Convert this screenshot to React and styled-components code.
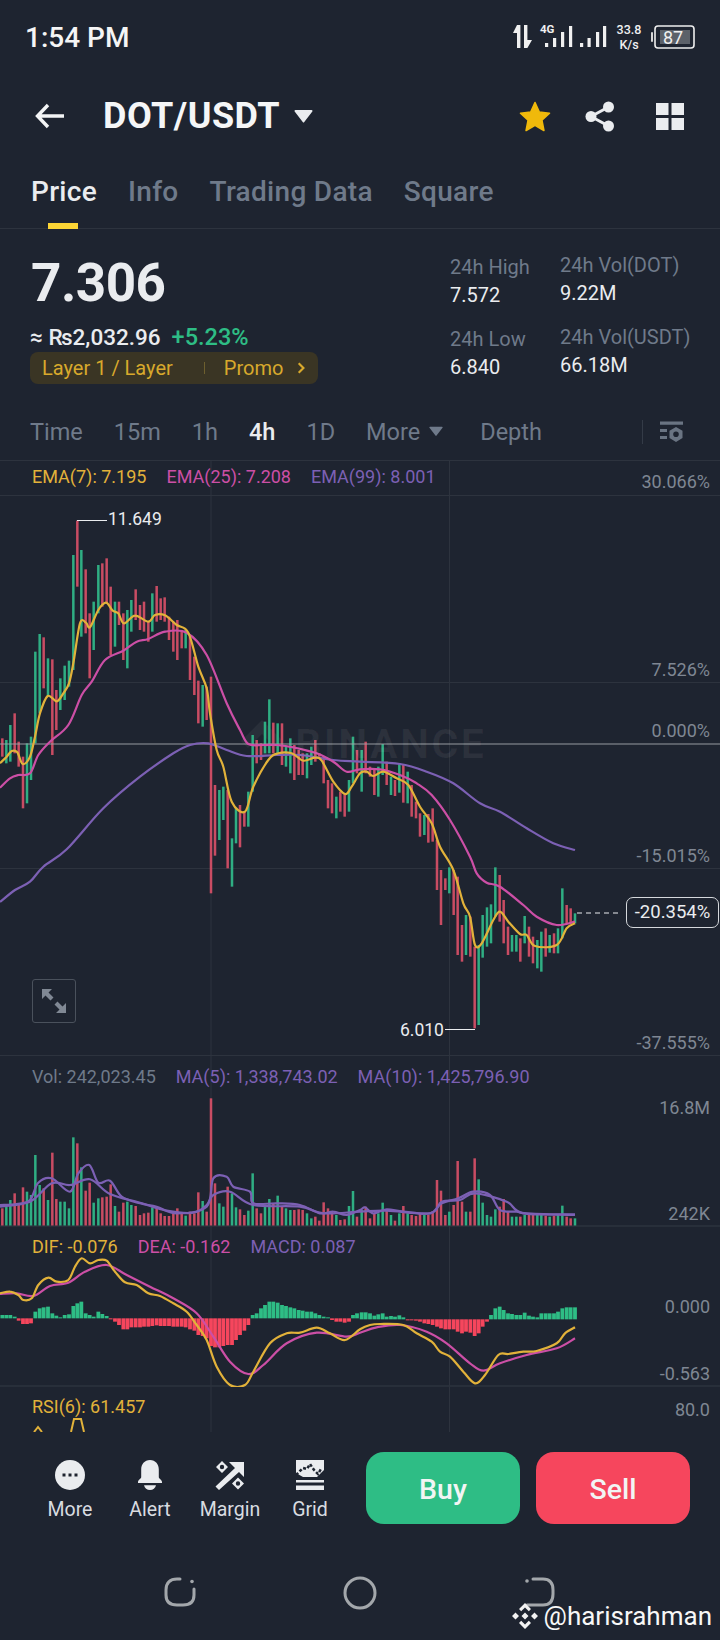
import React from "react";
import styled, { createGlobalStyle } from "styled-components";

const GlobalStyle = createGlobalStyle`
  html, body {
    margin: 0;
    padding: 0;
    background: #1e2430;
  }
  * {
    box-sizing: border-box;
  }
`;

const WHITE = "#eaecef";
const GRAY = "#6f7a8a";
const AXIS = "#7f8793";
const YELLOW = "#e2b23a";
const PINK = "#cc4fa6";
const PURPLE = "#7c60b4";
const GREEN = "#2ebd85";
const RED = "#f6465d";
const GRID = "#2d333e";

// [x, top, bottom, volume top, macd y, green?] read off the chart at 3x
const leftRows = [
  [7,745,800,475,795,0],[19,750,820,470,795,1],[31,705,815,450,795,1],[44,670,790,430,800,0],
  [56,755,830,465,812,0],[69,800,955,412,822,0],[81,760,940,425,822,1],[93,740,870,435,820,1],
  [106,485,760,315,785,1],[119,432,670,405,775,1],[131,442,595,415,772,0],[144,505,620,450,770,1],
  [157,508,795,308,790,0],[169,600,720,447,797,0],[181,565,660,455,802,1],[194,527,630,455,795,1],
  [207,512,590,475,793,1],[220,195,540,262,768,1],[232,92,290,280,760,0],[244,180,440,352,755,1],
  [257,238,430,422,790,0],[269,370,565,398,795,0],[281,335,480,458,800,1],[295,225,370,445,785,1],
  [307,220,350,442,792,0],[320,205,340,440,798,0],[332,290,495,403,808,0],[345,335,470,468,815,1],
  [357,335,405,485,825,0],[370,370,510,458,838,0],[382,360,535,455,838,1],[394,330,425,465,832,1],
  [407,298,390,468,832,0],[420,345,420,495,832,0],[432,335,425,490,830,0],[445,395,455,488,830,0],
  [457,310,425,472,828,1],[470,288,395,475,826,0],[482,325,390,490,828,0],[494,322,395,498,828,0],
  [507,380,450,498,828,0],[520,395,485,490,830,0],[532,390,510,475,830,0],[545,420,475,490,830,0],
  [557,420,475,497,832,1],[570,440,570,485,838,0],[583,500,615,490,842,0],[595,572,700,427,855,0],
  [608,585,710,453,858,1],[620,590,690,485,865,0],[633,560,1210,145,888,0],[645,885,1097,400,892,0],
  [658,900,1050,460,892,1],[670,890,990,470,888,1],[683,900,1135,410,885,0],[696,1045,1190,430,885,1],
  [708,955,1060,472,870,1],[720,945,1072,478,855,0],[733,965,1010,495,842,0],[745,905,1010,482,825,1],
  [758,735,905,370,795,1],[770,750,820,475,790,0],[783,760,810,490,775,0],[795,695,790,470,765,1],
  [808,628,790,447,755,1],[820,698,790,462,755,0],[833,700,790,437,758,1],[846,700,825,470,765,0],
  [858,770,830,475,768,1],[871,745,850,480,772,1],[883,765,870,480,775,0],[896,780,855,478,780,0],
  [908,790,855,480,782,0],[921,790,865,490,785,1],[934,770,825,505,785,1],[946,750,815,500,790,0],
  [958,790,800,512,795,0],[971,800,880,457,800,0],[984,870,955,475,802,0],[996,880,970,485,810,0],
  [1009,920,985,495,815,1],[1021,905,965,510,815,0],[1034,910,980,508,818,0],[1047,870,965,468,815,1],
  [1059,740,880,423,795,1],[1071,780,850,500,790,0],
];

const rightRows = [
  [5,270,395,480,787,1],[17,245,340,470,787,0],[30,320,350,505,790,0],[43,330,405,490,797,0],
  [55,320,410,490,793,1],[68,252,345,458,790,1],[80,305,375,480,800,0],[93,350,405,495,798,1],
  [105,360,408,512,800,0],[118,310,398,490,796,1],[130,315,428,468,802,0],[143,335,430,490,810,1],
  [155,375,470,495,810,0],[168,425,475,498,812,0],[180,460,530,490,815,0],[193,465,525,495,820,1],
  [205,462,548,495,822,0],[218,445,545,485,825,0],[231,540,690,390,830,0],[243,630,795,422,835,0],
  [256,655,690,495,838,0],[268,622,700,485,838,1],[281,630,765,465,838,0],[293,650,885,333,845,0],
  [306,795,905,455,850,0],[318,765,885,485,845,1],[331,770,890,485,848,0],[344,860,1105,325,858,0],
  [356,855,1095,388,850,1],[368,765,893,458,830,1],[381,742,860,495,815,1],[393,733,850,500,795,1],
  [406,622,770,478,775,1],[419,645,785,470,770,0],[431,720,850,447,780,0],[444,800,885,485,790,0],
  [456,825,875,500,792,1],[469,825,875,500,795,1],[481,835,905,500,795,0],[494,768,850,495,788,1],
  [507,800,890,495,797,0],[519,830,910,495,800,0],[532,840,925,495,802,1],[544,815,935,495,790,1],
  [557,805,890,497,790,0],[569,825,878,500,790,1],[582,820,880,497,790,0],[594,805,880,495,785,1],
  [607,685,835,467,775,1],[620,735,790,500,772,0],[632,745,790,505,772,0],[645,760,790,505,772,1],
];

const mapLeft = (v) => 490 + v / 3;
const mapRight = (v) => 660 + v / 3;
const mapLower = (v) => 1050 + v / 3;

const candles = [
  ...leftRows.map(([x, t, b, v, m, up]) => ({ x: x / 3, top: mapLeft(t), bottom: mapLeft(b), vol: mapLower(v), macd: mapLower(m), zero: 805, m, up })),
  ...rightRows.map(([x, t, b, v, m, up]) => ({ x: 360 + x / 3, top: mapRight(t), bottom: mapRight(b), vol: mapLower(v), macd: mapLower(m), zero: 808, m, up })),
];

// catmull-rom through the points, so the averages don't look like polygons
const smoothPath = (pts) => {
  let d = `M${pts[0][0].toFixed(1)} ${pts[0][1].toFixed(1)}`;
  for (let i = 0; i < pts.length - 1; i++) {
    const p0 = pts[i - 1] || pts[i];
    const p1 = pts[i];
    const p2 = pts[i + 1];
    const p3 = pts[i + 2] || p2;
    const c1x = p1[0] + (p2[0] - p0[0]) / 6;
    const c1y = p1[1] + (p2[1] - p0[1]) / 6;
    const c2x = p2[0] - (p3[0] - p1[0]) / 6;
    const c2y = p2[1] - (p3[1] - p1[1]) / 6;
    d += `C${c1x.toFixed(1)} ${c1y.toFixed(1)} ${c2x.toFixed(1)} ${c2y.toFixed(1)} ${p2[0].toFixed(1)} ${p2[1].toFixed(1)}`;
  }
  return d;
};

// line series, each as a left half and a right half in the same 3x units
const toPath = (left, right, mapL, mapR) =>
  smoothPath([
    ...left.map(([x, y]) => [x / 3, mapL(y)]),
    ...right.map(([x, y]) => [360 + x / 3, mapR(y)]),
  ]);

const ema7 = toPath(
  [[0,820],[20,800],[35,783],[52,787],[68,822],[90,800],[105,740],[120,670],[143,618],[170,634],[190,610],[207,580],[220,520],[240,400],[258,398],[270,412],[295,360],[318,338],[338,362],[355,370],[372,400],[405,377],[445,395],[465,375],[495,376],[530,405],[565,428],[595,530],[620,595],[630,670],[650,780],[670,830],[695,935],[735,965],[760,890],[805,810],[835,790],[875,790],[910,812],[945,803],[965,812],[1000,875],[1035,912],[1055,890],[1080,850]],
  [[20,335],[40,348],[70,335],[110,355],[145,375],[180,440],[215,490],[240,560],[280,630],[310,730],[330,770],[345,855],[365,850],[400,780],[420,755],[445,785],[480,822],[500,825],[525,858],[590,855],[620,805],[645,790]],
  mapLeft,
  mapRight
);
const ema25 = toPath(
  [[0,893],[30,865],[55,855],[90,850],[115,795],[150,755],[205,705],[245,615],[275,575],[315,510],[370,482],[410,455],[445,447],[495,425],[560,428],[620,495],[680,640],[720,720],[745,762],[790,765],[830,765],[880,772],[950,790],[1000,815],[1040,845],[1080,838]],
  [[60,328],[120,345],[170,370],[215,405],[270,480],[330,590],[350,640],[380,668],[420,680],[490,735],[530,770],[590,795],[645,785]],
  mapLeft,
  mapRight
);
const ema99 = toPath(
  [[0,1236],[45,1200],[90,1175],[130,1130],[200,1078],[310,955],[420,860],[520,790],[570,765],[625,760],[680,780],[740,798],[830,795],[900,795],[1000,810],[1080,815]],
  [[120,312],[200,335],[280,370],[360,430],[420,455],[500,505],[580,550],[645,570]],
  mapLeft,
  mapRight
);
const volMa5 = toPath(
  [[0,465],[50,462],[90,450],[115,398],[155,385],[210,425],[235,370],[268,345],[295,398],[330,392],[365,440],[420,460],[470,470],[530,490],[620,470],[640,385],[680,380],[700,410],[750,425],[760,460],[830,460],[900,465],[960,490],[1000,485],[1040,495],[1080,480]],
  [[15,472],[40,490],[80,478],[130,485],[210,490],[245,460],[295,445],[340,425],[390,435],[420,480],[470,485],[500,490],[645,495]],
  mapLower,
  mapLower
);
const volMa10 = toPath(
  [[0,470],[90,455],[155,400],[210,405],[270,388],[330,432],[420,458],[500,482],[580,488],[620,465],[640,435],[690,425],[760,465],[900,470],[970,490],[1080,485]],
  [[80,482],[210,490],[245,455],[300,450],[345,430],[440,455],[490,490],[645,493]],
  mapLower,
  mapLower
);
const dif = toPath(
  [[0,730],[30,725],[55,735],[70,750],[95,745],[115,705],[145,683],[170,695],[205,690],[225,650],[245,625],[270,640],[295,630],[320,632],[345,665],[375,697],[410,705],[445,730],[480,738],[520,760],[560,785],[590,825],[620,870],[650,950],[690,1005],[735,1005],[760,965],[810,880],[860,850],[900,848],[950,833],[990,850],[1035,870],[1080,838]],
  [[30,825],[60,822],[130,825],[170,850],[215,875],[240,905],[270,920],[310,965],[345,1000],[375,975],[415,915],[445,912],[490,905],[530,903],[590,880],[615,850],[645,832]],
  mapLower,
  mapLower
);
const dea = toPath(
  [[0,732],[50,730],[100,738],[150,708],[205,698],[255,665],[320,645],[380,675],[450,710],[520,745],[590,790],[640,860],[690,935],[745,972],[790,945],[860,880],[950,848],[1040,860],[1080,848]],
  [[50,832],[120,825],[200,845],[260,880],[330,940],[370,962],[420,940],[500,915],[590,895],[645,865]],
  mapLower,
  mapLower
);

const Page = styled.div`
  width: 720px;
  height: 1640px;
  overflow: hidden;
  position: relative;
  background: #1e2430;
  color: ${WHITE};
  font-family: Roboto, "Noto Sans", sans-serif;
`;

const StatusBar = styled.div`
  height: 74px;
  padding: 0 25px;
  display: flex;
  align-items: center;
  justify-content: space-between;
`;

const Clock = styled.div`
  padding-top: 1px;
  font-size: 28px;
  font-weight: 500;
  color: #f5f5f5;
`;

const Header = styled.div`
  height: 84px;
  padding: 0 36px 0 35px;
  display: flex;
  align-items: center;
`;

const PairName = styled.div`
  margin: 0 14px 0 38px;
  font-size: 36px;
  font-weight: 700;
  letter-spacing: 0.5px;
  color: #f5f6f7;
`;

const HeaderIcons = styled.div`
  margin-left: auto;
  display: flex;
  align-items: center;
  gap: 34px;

  svg:last-child {
    margin-left: 7px;
  }
`;

const Tabs = styled.div`
  height: 71px;
  padding: 0 31px;
  display: flex;
  gap: 31px;
  border-bottom: 1px solid ${GRID};
`;

const Tab = styled.div`
  position: relative;
  height: 71px;
  line-height: 68px;
  font-size: 28px;
  font-weight: 500;
  letter-spacing: 0.3px;
  color: ${(p) => (p.$active ? WHITE : GRAY)};

  ${(p) =>
    p.$active &&
    `&::after {
      content: "";
      position: absolute;
      left: 17px;
      bottom: 0;
      width: 30px;
      height: 6px;
      background: #fcd535;
    }`}
`;

const Summary = styled.div`
  height: 175px;
  padding-left: 30px;
  display: flex;
`;

const PriceCol = styled.div`
  width: 420px;
  padding-top: 27px;
`;

const BigPrice = styled.div`
  height: 54px;
  line-height: 54px;
  margin-left: 1px;
  font-size: 53px;
  font-weight: 700;
  letter-spacing: -0.5px;
`;

const SubPrice = styled.div`
  margin-top: 13px;
  height: 28px;
  line-height: 28px;
  font-size: 22.5px;
  font-weight: 500;
  display: flex;
  gap: 11px;
`;

const Change = styled.span`
  color: ${GREEN};
  font-size: 23.5px;
`;

const Pill = styled.div`
  margin-top: 1px;
  width: 288px;
  height: 32px;
  padding: 0 12px;
  display: flex;
  align-items: center;
  border-radius: 8px;
  background: #3a3524;
  font-size: 20px;
  color: #d8a92c;
  white-space: nowrap;
`;

const PillLabel = styled.span`
  width: 162px;
  flex: none;
`;

const PillDivider = styled.span`
  width: 1px;
  height: 12px;
  margin-right: 19px;
  background: #6d5f2e;
`;

const StatCol = styled.div`
  width: ${(p) => p.$width}px;
  padding-top: ${(p) => p.$top}px;
`;

const StatLabel = styled.div`
  height: 28px;
  line-height: 28px;
  font-size: 20px;
  color: ${GRAY};
  white-space: nowrap;
`;

const StatValue = styled.div`
  height: 28px;
  line-height: 28px;
  margin-bottom: 16px;
  font-size: 20px;
  color: ${WHITE};
  white-space: nowrap;
`;

const Intervals = styled.div`
  height: 57px;
  padding: 0 36px 1px 30px;
  display: flex;
  align-items: center;
  gap: 31px;
  border-bottom: 1px solid ${GRID};
  font-size: 23.5px;
  color: ${GRAY};
`;

const Interval = styled.span`
  display: flex;
  align-items: center;
  gap: 9px;
  margin-right: ${(p) => p.$after || 0}px;
  color: ${(p) => (p.$active ? WHITE : GRAY)};
  font-weight: ${(p) => (p.$active ? 500 : 400)};
`;

const IntervalTools = styled.div`
  margin-left: auto;
  display: flex;
  align-items: center;
  gap: 16px;
`;

const ToolDivider = styled.span`
  width: 1px;
  height: 24px;
  background: #343b47;
`;

const Charts = styled.div`
  height: 971px;
  display: flex;
  flex-direction: column;
  overflow: hidden;
`;

const Pane = styled.div`
  position: relative;
  height: ${(p) => p.$height}px;
  flex: none;
`;

const PaneDrawing = styled.svg`
  position: absolute;
  left: 0;
  top: 0;
  display: block;
`;

const Legend = styled.div`
  position: relative;
  height: ${(p) => p.$height}px;
  padding-left: 32px;
  display: flex;
  align-items: center;
  gap: 20px;
  font-size: 18px;
  white-space: nowrap;
`;

const LegendItem = styled.span`
  color: ${(p) => p.$color};
`;

const AxisLabel = styled.div`
  position: absolute;
  right: 10px;
  top: ${(p) => p.$top}px;
  height: 24px;
  line-height: 24px;
  font-size: 18px;
  color: ${AXIS};
`;

const PriceMark = styled.div`
  position: absolute;
  left: ${(p) => p.$left}px;
  top: ${(p) => p.$top}px;
  height: 24px;
  line-height: 24px;
  font-size: 17.5px;
  color: ${WHITE};
`;

const CurrentTag = styled.div`
  position: absolute;
  left: 626px;
  top: 436px;
  width: 93px;
  height: 31px;
  line-height: 29px;
  text-align: center;
  border: 1px solid #d5d8dc;
  border-radius: 7px;
  background: #1e2430;
  font-size: 18.5px;
  color: ${WHITE};
`;

const Watermark = styled.div`
  position: absolute;
  left: 295px;
  top: 260px;
  height: 46px;
  line-height: 46px;
  font-size: 41px;
  font-weight: 700;
  letter-spacing: 2.5px;
  color: rgba(255, 255, 255, 0.06);
`;

const ExpandButton = styled.div`
  position: absolute;
  left: 32px;
  top: 518px;
  width: 44px;
  height: 44px;
  display: flex;
  align-items: center;
  justify-content: center;
  border: 1px solid #4a515c;
  border-radius: 3px;
  background: #1e2430;
`;

const ActionBar = styled.div`
  padding: 20px 30px 0;
  display: flex;
  gap: 16px;
`;

const ToolGrid = styled.div`
  width: 320px;
  display: grid;
  grid-template-columns: repeat(4, 80px);
`;

const Tool = styled.div`
  padding-top: 8px;
  display: flex;
  flex-direction: column;
  align-items: center;
  gap: 8px;
  font-size: 19.5px;
  line-height: 24px;
  color: #d9dce0;
`;

const TradeButton = styled.div`
  width: 154px;
  height: 72px;
  padding-top: 3px;
  border-radius: 18px;
  display: flex;
  align-items: center;
  justify-content: center;
  background: ${(p) => p.$bg};
  font-size: 28.5px;
  font-weight: 500;
  color: #f2f5f4;
`;

const NavBar = styled.div`
  margin-top: 52px;
  padding: 0 90px;
  display: grid;
  grid-template-columns: repeat(3, 180px);
  justify-items: center;
`;

const Credit = styled.div`
  position: absolute;
  right: 8px;
  bottom: 7px;
  display: flex;
  align-items: center;
  gap: 5px;
  font-size: 26px;
  line-height: 34px;
  color: #f7f7f7;
`;

const NetSpeed = styled.div`
  width: 26px;
  text-align: center;
  font-size: 12.5px;
  line-height: 15px;
  font-weight: 500;
  color: #f0f0f0;
`;

const StatusIcons = styled.div`
  display: flex;
  align-items: center;
  gap: 9px;
`;

const barTops = [21, 16, 10, 4];

function SignalIcon() {
  return (
    <svg width="94" height="30" viewBox="0 0 94 30">
      <path d="M4 3h3.400v23H4zM4 3v8H0zM11 3h3.400v23H11zM14.400 26v-8H19z" fill="#f0f0f0" />
      <text x="27" y="10.500" fontSize="11.500" fontWeight="700" fill="#f0f0f0" fontFamily="Roboto, sans-serif">4G</text>
      {[32, 40, 48, 56].map((x, i) => (
        <rect key={x} x={x} y={barTops[i]} width="3.200" height={25 - barTops[i]} fill="#f0f0f0" />
      ))}
      {[67, 74.500, 83, 90].map((x, i) => (
        <rect key={x} x={x} y={barTops[i]} width="3.200" height={25 - barTops[i]} fill="#f0f0f0" />
      ))}
    </svg>
  );
}

function BatteryIcon() {
  return (
    <svg width="44" height="24" viewBox="0 0 44 24">
      <rect x="0" y="7" width="2" height="10" rx="1" fill="#d8d8d8" />
      <rect x="4" y="1" width="39" height="22" rx="3" fill="none" stroke="#eeeeee" strokeWidth="1.600" />
      <rect x="9" y="5" width="30" height="14" fill="#5c6169" />
      <text x="12" y="18.500" fontSize="18" fill="#f0f0f0" fontFamily="Roboto, sans-serif">87</text>
    </svg>
  );
}

function BackArrow() {
  return (
    <svg width="30" height="26" viewBox="0 0 30 26">
      <path d="M29 13H3M13 2L2.500 13 13 24" fill="none" stroke="#f3f4f5" strokeWidth="3.400" />
    </svg>
  );
}

function Caret({ size = 19, color = WHITE }) {
  return (
    <svg width={size} height={size * 0.75} viewBox="0 0 20 15">
      <path d="M1.500 1h17a1 1 0 0 1 .8 1.600l-8.500 11a1 1 0 0 1-1.600 0l-8.500-11A1 1 0 0 1 1.500 1z" fill={color} />
    </svg>
  );
}

function StarIcon() {
  return (
    <svg width="32" height="31" viewBox="0 0 32 31">
      <path
        d="M16 1.500l4.300 9.500 10.200 1.200-7.600 7 2 10.300L16 24.300 7.100 29.500l2-10.300-7.600-7L11.700 11z"
        fill="#f0b90b"
        stroke="#f0b90b"
        strokeWidth="1.600"
        strokeLinejoin="round"
      />
    </svg>
  );
}

function ShareIcon() {
  return (
    <svg width="30" height="31" viewBox="0 0 30 31">
      <circle cx="6" cy="15.500" r="5.500" fill={WHITE} />
      <circle cx="23.500" cy="6" r="5.500" fill={WHITE} />
      <circle cx="23.500" cy="25" r="5.500" fill={WHITE} />
      <path d="M6 15.500L23.500 6M6 15.500L23.500 25" stroke={WHITE} strokeWidth="3" />
    </svg>
  );
}

function GridIcon() {
  return (
    <svg width="28" height="27" viewBox="0 0 28 27">
      <path d="M0 0h12.500v12H0zM15.500 0H28v12H15.500zM0 15h12.500v12H0zM15.500 15H28v12H15.500z" fill={WHITE} />
    </svg>
  );
}

function ChartSettingsIcon() {
  return (
    <svg width="25" height="24" viewBox="0 0 25 24">
      <path d="M1 1.500h23v3.200H1zM1 9h7v3H1zM1 16h7v3H1z" fill="#6a7482" />
      <path fillRule="evenodd" d="M17 7l6.500 3.700v7.200L17 22l-6.500-4.100v-7.200zM17 11.500a2.800 2.800 0 1 0 0 5.600 2.800 2.800 0 0 0 0-5.600z" fill="#6a7482" />
    </svg>
  );
}

function ExpandIcon() {
  return (
    <svg width="28" height="28" viewBox="0 0 28 28">
      <path d="M2 2h10l-3.500 3.500 5 5-3 3-5-5L2 12zM26 26H16l3.500-3.500-5-5 3-3 5 5L26 16z" fill="#808894" />
    </svg>
  );
}

function MoreIcon() {
  return (
    <svg width="30" height="30" viewBox="0 0 30 30">
      <circle cx="15" cy="15" r="15" fill={WHITE} />
      <path d="M7.500 13.500h3v3h-3zM13.500 13.500h3v3h-3zM19.500 13.500h3v3h-3z" fill="#1e2430" />
    </svg>
  );
}

function BellIcon() {
  return (
    <svg width="30" height="30" viewBox="0 0 30 30">
      <path d="M15 0c5.500 0 8.800 4.300 8.800 9.500v7.500c0 1.800 3.200 2.800 3.200 5v1H3v-1c0-2.200 3.200-3.200 3.200-5V9.500C6.200 4.300 9.500 0 15 0z" fill={WHITE} />
      <path d="M9 25.200h12C20.300 28 18 30 15 30s-5.300-2-6-4.800z" fill={WHITE} />
    </svg>
  );
}

function MarginIcon() {
  return (
    <svg width="30" height="30" viewBox="0 0 30 30">
      <path d="M14 2h15v15l-5-5L4 30l-3.500-3.500L20 8z" fill={WHITE} />
      <path fillRule="evenodd" d="M7 1l6 6-6 6-6-6zM7 4.800a2.200 2.200 0 1 0 0 4.400 2.200 2.200 0 0 0 0-4.400z" fill={WHITE} />
      <path fillRule="evenodd" d="M23 17.500l6 6-6 6-6-6zM23 21.300a2.200 2.200 0 1 0 0 4.400 2.200 2.200 0 0 0 0-4.400z" fill={WHITE} />
    </svg>
  );
}

function GridBotIcon() {
  return (
    <svg width="28" height="30" viewBox="0 0 28 30">
      <path d="M0 0h28v10l-7 7H7l-7-4z" fill={WHITE} />
      <path d="M0 15l7-7 4 1 3-5 4 6 4 4 3-5" fill="none" stroke="#1e2430" strokeWidth="2.500" strokeDasharray="3 2" />
      <path d="M0 20h28v2.500H0zM0 25.500h28V30H0z" fill={WHITE} />
    </svg>
  );
}

function RecentsIcon() {
  return (
    <svg width="32" height="32" viewBox="0 0 32 32">
      <path d="M16 3h-3C6 3 2 7 2 14v5c0 7 4 10 11 10h6c7 0 11-3 11-10v-6" fill="none" stroke="#a3a7ab" strokeWidth="3" strokeLinecap="round" />
      <circle cx="28" cy="5.500" r="1.800" fill="#a3a7ab" />
    </svg>
  );
}

function HomeIcon() {
  return (
    <svg width="34" height="34" viewBox="0 0 34 34">
      <circle cx="17" cy="17" r="15" fill="none" stroke="#a3a7ab" strokeWidth="3" />
    </svg>
  );
}

function NavBackIcon() {
  return (
    <svg width="32" height="32" viewBox="0 0 32 32">
      <path d="M9 3h10c7 0 10 4 10 11v4c0 7-3 11-10 11H3" fill="none" stroke="#a3a7ab" strokeWidth="3" strokeLinecap="round" />
      <circle cx="3" cy="5" r="1.800" fill="#a3a7ab" />
    </svg>
  );
}

function BinanceLogo({ size = 28, color = "#f2f2f2" }) {
  return (
    <svg width={size} height={size} viewBox="0 0 28 28">
      <path d="M14 1l6 6-2.200 2.200L14 5.400l-3.800 3.800L8 7zM14 27l-6-6 2.200-2.200 3.800 3.800 3.800-3.800L20 21zM1 14l3.500-3.500L8 14l-3.500 3.500zM20 14l3.500-3.500L27 14l-3.500 3.500zM14 10.500l3.500 3.500-3.500 3.500-3.500-3.500z" fill={color} />
    </svg>
  );
}

function VerticalGrid({ top, bottom }) {
  return (
    <>
      <line x1="211" x2="211" y1={top} y2={bottom} stroke={GRID} />
      <line x1="449.500" x2="449.500" y1={top} y2={bottom} stroke={GRID} />
    </>
  );
}

const RED_MUTED = "#c94c63";
const GREEN_MUTED = "#2fae83";

function Curve({ d, color }) {
  return <path d={d} fill="none" stroke={color} strokeWidth="2.200" strokeLinejoin="round" />;
}

function MainDrawing() {
  return (
    <PaneDrawing width="720" height="595" viewBox="0 461 720 595">
      <VerticalGrid top={461} bottom={1056} />
      {[495, 682, 868, 1055].map((y) => (
        <line key={y} x1="0" x2="720" y1={y + 0.5} y2={y + 0.5} stroke={GRID} />
      ))}
      <path d="M262 720l21 21-7 7-14-14-14 14-7-7zM262 745l7 7-7 7-7-7z" fill="#ffffff" fillOpacity="0.05" />
      {candles.map((c) => (
        <rect
          key={c.x}
          x={c.x - 1.25}
          y={c.top}
          width="2.500"
          height={c.bottom - c.top}
          fill={c.up ? GREEN_MUTED : RED_MUTED}
        />
      ))}
      <line x1="0" x2="720" y1="744" y2="744" stroke="#9a9ea5" strokeOpacity="0.65" strokeWidth="1.500" />
      <Curve d={ema99} color={PURPLE} />
      <Curve d={ema25} color={PINK} />
      <Curve d={ema7} color={YELLOW} />
      <line x1="77" x2="107" y1="520.500" y2="520.500" stroke={WHITE} />
      <line x1="445" x2="475" y1="1029.500" y2="1029.500" stroke={WHITE} />
      <line x1="577" x2="622" y1="913" y2="913" stroke={WHITE} strokeDasharray="5 4" />
    </PaneDrawing>
  );
}

function VolumeDrawing() {
  return (
    <PaneDrawing width="720" height="171" viewBox="0 1056 720 171">
      <VerticalGrid top={1056} bottom={1227} />
      <line x1="0" x2="720" y1="1226" y2="1226" stroke={GRID} strokeWidth="1.500" />
      {candles.map((c) => (
        <rect
          key={c.x}
          x={c.x - 1.25}
          y={c.vol}
          width="2.500"
          height={1225.500 - c.vol}
          fill={c.up ? GREEN_MUTED : RED_MUTED}
        />
      ))}
      <Curve d={volMa10} color={PURPLE} />
      <Curve d={volMa5} color={PURPLE} />
    </PaneDrawing>
  );
}

function MacdDrawing() {
  return (
    <PaneDrawing width="720" height="160" viewBox="0 1227 720 160">
      <VerticalGrid top={1227} bottom={1387} />
      <line x1="0" x2="720" y1="1386" y2="1386" stroke={GRID} strokeWidth="1.500" />
      {candles.map((c) => {
        const zeroY = mapLower(c.zero);
        const above = c.m < c.zero;
        return (
          <rect
            key={c.x}
            x={c.x - 1.9}
            y={above ? c.macd : zeroY}
            width="3.800"
            height={Math.max(Math.abs(c.macd - zeroY), 1)}
            fill={above ? GREEN : RED}
          />
        );
      })}
      <Curve d={dea} color={PINK} />
      <Curve d={dif} color={YELLOW} />
    </PaneDrawing>
  );
}

function RsiDrawing() {
  return (
    <PaneDrawing width="720" height="45" viewBox="0 1387 720 45">
      <VerticalGrid top={1387} bottom={1432} />
      <polyline points="34,1432 38,1427 42,1432" fill="none" stroke={YELLOW} strokeWidth="2" />
      <polyline points="71,1432 74,1419 81,1419 84,1432" fill="none" stroke={YELLOW} strokeWidth="2" />
    </PaneDrawing>
  );
}

export default function App() {
  return (
    <>
      <GlobalStyle />
      <Page>
        <StatusBar>
          <Clock>1:54 PM</Clock>
          <StatusIcons>
            <SignalIcon />
            <NetSpeed>
              33.8
              <br />
              K/s
            </NetSpeed>
            <BatteryIcon />
          </StatusIcons>
        </StatusBar>

        <Header>
          <BackArrow />
          <PairName>DOT/USDT</PairName>
          <Caret />
          <HeaderIcons>
            <StarIcon />
            <ShareIcon />
            <GridIcon />
          </HeaderIcons>
        </Header>

        <Tabs>
          <Tab $active>Price</Tab>
          <Tab>Info</Tab>
          <Tab>Trading Data</Tab>
          <Tab>Square</Tab>
        </Tabs>

        <Summary>
          <PriceCol>
            <BigPrice>7.306</BigPrice>
            <SubPrice>
              <span>≈ ₨2,032.96</span>
              <Change>+5.23%</Change>
            </SubPrice>
            <Pill>
              <PillLabel>Layer 1 / Layer</PillLabel>
              <PillDivider />
              Promo
              <svg width="10" height="14" viewBox="0 0 10 14" style={{ marginLeft: 14 }}>
                <path d="M2 1.500L7.500 7 2 12.500" fill="none" stroke="#d8a92c" strokeWidth="2.500" />
              </svg>
            </Pill>
          </PriceCol>
          <StatCol $width={110} $top={24}>
            <StatLabel>24h High</StatLabel>
            <StatValue>7.572</StatValue>
            <StatLabel>24h Low</StatLabel>
            <StatValue>6.840</StatValue>
          </StatCol>
          <StatCol $width={150} $top={22}>
            <StatLabel>24h Vol(DOT)</StatLabel>
            <StatValue>9.22M</StatValue>
            <StatLabel>24h Vol(USDT)</StatLabel>
            <StatValue>66.18M</StatValue>
          </StatCol>
        </Summary>

        <Intervals>
          <Interval>Time</Interval>
          <Interval>15m</Interval>
          <Interval>1h</Interval>
          <Interval $active>4h</Interval>
          <Interval>1D</Interval>
          <Interval $after={6}>
            More
            <Caret size={14} color={GRAY} />
          </Interval>
          <Interval>Depth</Interval>
          <IntervalTools>
            <ToolDivider />
            <ChartSettingsIcon />
          </IntervalTools>
        </Intervals>

        <Charts>
          <Pane $height={595}>
            <MainDrawing />
            <Watermark>BINANCE</Watermark>
            <Legend $height={30}>
              <LegendItem $color={YELLOW}>EMA(7): 7.195</LegendItem>
              <LegendItem $color={PINK}>EMA(25): 7.208</LegendItem>
              <LegendItem $color={PURPLE}>EMA(99): 8.001</LegendItem>
            </Legend>
            <PriceMark $left={108} $top={46}>11.649</PriceMark>
            <PriceMark $left={400} $top={557}>6.010</PriceMark>
            <AxisLabel $top={9}>30.066%</AxisLabel>
            <AxisLabel $top={197}>7.526%</AxisLabel>
            <AxisLabel $top={258}>0.000%</AxisLabel>
            <AxisLabel $top={383}>-15.015%</AxisLabel>
            <AxisLabel $top={570}>-37.555%</AxisLabel>
            <CurrentTag>-20.354%</CurrentTag>
            <ExpandButton>
              <ExpandIcon />
            </ExpandButton>
          </Pane>

          <Pane $height={171}>
            <VolumeDrawing />
            <Legend $height={40}>
              <LegendItem $color={GRAY}>Vol: 242,023.45</LegendItem>
              <LegendItem $color={PURPLE}>MA(5): 1,338,743.02</LegendItem>
              <LegendItem $color={PURPLE}>MA(10): 1,425,796.90</LegendItem>
            </Legend>
            <AxisLabel $top={40}>16.8M</AxisLabel>
            <AxisLabel $top={146}>242K</AxisLabel>
          </Pane>

          <Pane $height={160}>
            <MacdDrawing />
            <Legend $height={38}>
              <LegendItem $color={YELLOW}>DIF: -0.076</LegendItem>
              <LegendItem $color={PINK}>DEA: -0.162</LegendItem>
              <LegendItem $color={PURPLE}>MACD: 0.087</LegendItem>
            </Legend>
            <AxisLabel $top={68}>0.000</AxisLabel>
            <AxisLabel $top={135}>-0.563</AxisLabel>
          </Pane>

          <Pane $height={45}>
            <RsiDrawing />
            <Legend $height={38}>
              <LegendItem $color={YELLOW}>RSI(6): 61.457</LegendItem>
            </Legend>
            <AxisLabel $top={11}>80.0</AxisLabel>
          </Pane>
        </Charts>

        <ActionBar>
          <ToolGrid>
            <Tool>
              <MoreIcon />
              More
            </Tool>
            <Tool>
              <BellIcon />
              Alert
            </Tool>
            <Tool>
              <MarginIcon />
              Margin
            </Tool>
            <Tool>
              <GridBotIcon />
              Grid
            </Tool>
          </ToolGrid>
          <TradeButton $bg="#2ebd85">Buy</TradeButton>
          <TradeButton $bg="#f6465d">Sell</TradeButton>
        </ActionBar>

        <NavBar>
          <RecentsIcon />
          <HomeIcon />
          <NavBackIcon />
        </NavBar>

        <Credit>
          <BinanceLogo />
          @harisrahman
        </Credit>
      </Page>
    </>
  );
}
